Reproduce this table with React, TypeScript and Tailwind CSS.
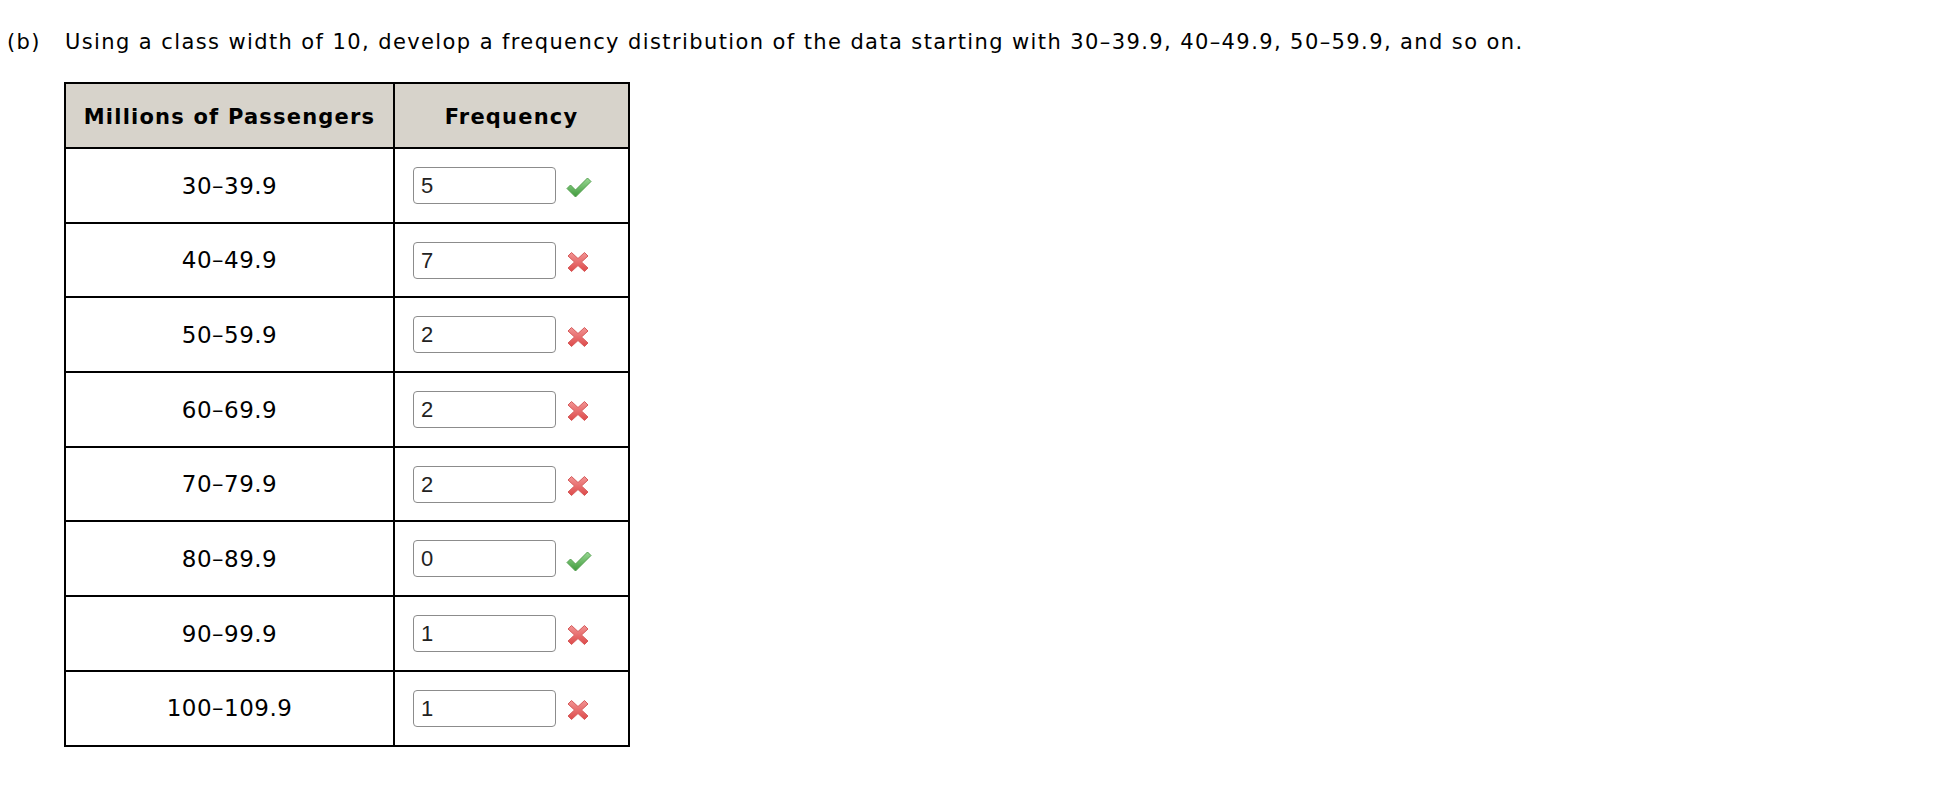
import React from "react";

const rows: { label: string; value: string; ok: boolean }[] = [
  { label: "30–39.9", value: "5", ok: true },
  { label: "40–49.9", value: "7", ok: false },
  { label: "50–59.9", value: "2", ok: false },
  { label: "60–69.9", value: "2", ok: false },
  { label: "70–79.9", value: "2", ok: false },
  { label: "80–89.9", value: "0", ok: true },
  { label: "90–99.9", value: "1", ok: false },
  { label: "100–109.9", value: "1", ok: false },
];

function Check() {
  return (
    <svg width="28" height="24" viewBox="0 0 28 24" className="shrink-0">
      <defs>
        <linearGradient id="gck" x1="0" y1="0" x2="0" y2="1">
          <stop offset="0" stopColor="#9ad994" />
          <stop offset="1" stopColor="#3f9a3c" />
        </linearGradient>
      </defs>
      <path
        d="M2 13.5 L5.5 10 L10.5 15 L22.5 3 L26 6.5 L10.5 22 Z"
        fill="url(#gck)"
        stroke="#55a050"
        strokeWidth="1"
        strokeLinejoin="round"
      />
    </svg>
  );
}

function Cross() {
  return (
    <svg width="26" height="22" viewBox="0 0 26 22" className="shrink-0">
      <defs>
        <linearGradient id="gcx" x1="0" y1="0" x2="0" y2="1">
          <stop offset="0" stopColor="#f29494" />
          <stop offset="1" stopColor="#dd4a4a" />
        </linearGradient>
      </defs>
      <path
        d="M3 5 L6.5 1.5 L13 7.5 L19.5 1.5 L23 5 L16.5 11 L23 17 L19.5 20.5 L13 14.5 L6.5 20.5 L3 17 L9.5 11 Z"
        fill="url(#gcx)"
        stroke="#d65a5a"
        strokeWidth="1"
        strokeLinejoin="round"
      />
    </svg>
  );
}

export default function App() {
  return (
    <div
      className="w-[1956px] h-[800px] bg-white text-black"
      style={{ fontFamily: '"DejaVu Sans", Verdana, sans-serif' }}
    >
      <div className="pt-[29px] pl-[7px] flex text-[21px] leading-[27px] tracking-[1.4px]">
        <span className="w-[58px]">(b)</span>
        <span>
          Using a class width of 10, develop a frequency distribution of the data starting with 30–39.9, 40–49.9, 50–59.9, and so on.
        </span>
      </div>
      <div className="ml-[64px] mt-[26px] w-[566px] border-2 border-black">
        <div className="flex h-[63px] pt-[4px] bg-[#d7d3cb] font-bold text-[21px] tracking-[1.2px]">
          <div className="w-[329px] border-r-2 border-black -mt-[4px] pt-[4px] flex items-center justify-center">
            Millions of Passengers
          </div>
          <div className="flex-1 flex items-center justify-center">Frequency</div>
        </div>
        {rows.map((r) => (
          <div key={r.label} className="flex h-[74.7px] border-t-2 border-black text-[23px] tracking-[0.5px]">
            <div className="w-[329px] border-r-2 border-black pt-[1px] flex items-center justify-center">
              {r.label}
            </div>
            <div className="flex-1 flex items-center pl-[18px] gap-[9px]">
              <div
                className="w-[143px] h-[37px] border border-[#8c8c8c] rounded-[4px] bg-white flex items-center pl-[7px] text-[22px] tracking-normal text-[#222]"
                style={{ fontFamily: '"Liberation Sans", Arial, sans-serif' }}
              >
                {r.value}
              </div>
              <div className="mt-[4px]">{r.ok ? <Check /> : <Cross />}</div>
            </div>
          </div>
        ))}
      </div>
    </div>
  );
}
